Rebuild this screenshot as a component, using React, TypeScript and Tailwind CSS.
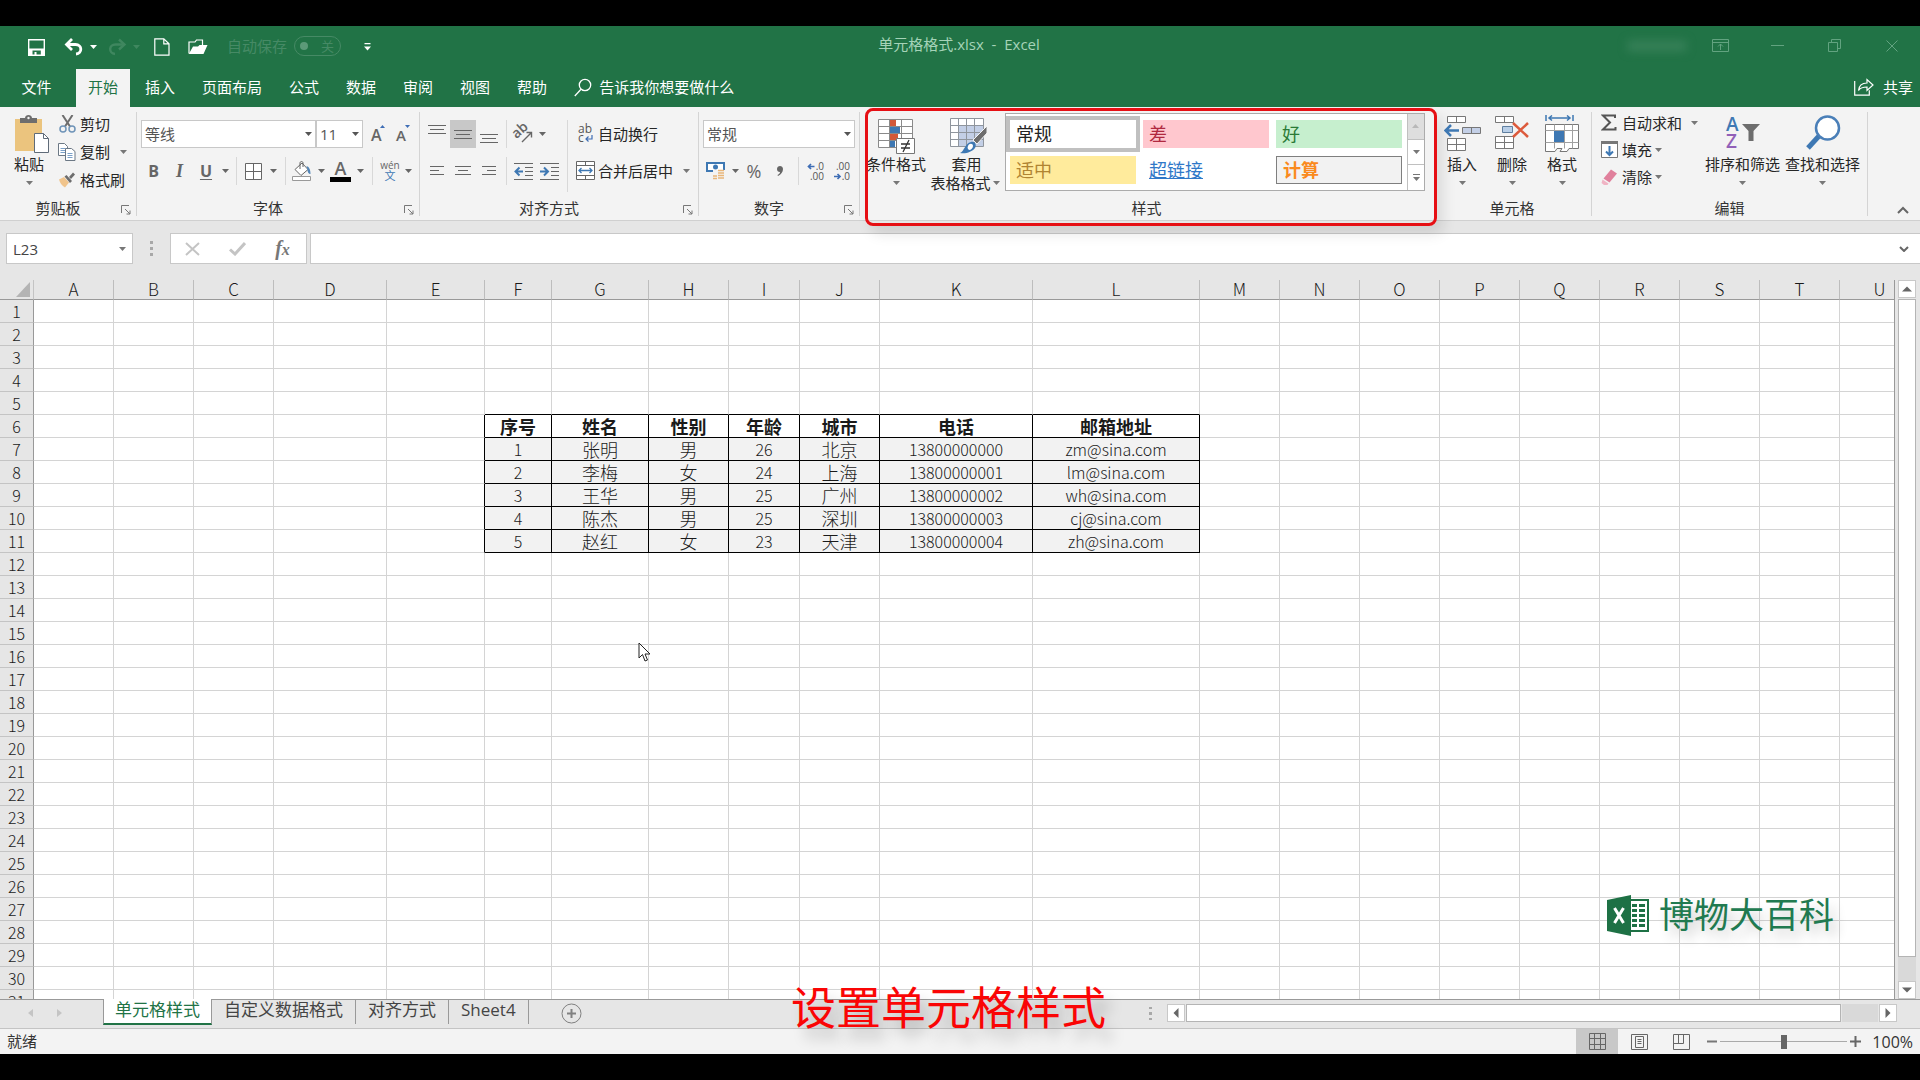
import type { ReactNode } from 'react'
import { clsx } from 'clsx'

/* ---------- sheet data ---------- */

type Column = { name: string; width: number }

const COLUMNS: Column[] = [
  { name: 'A', width: 80 },
  { name: 'B', width: 80 },
  { name: 'C', width: 80 },
  { name: 'D', width: 113 },
  { name: 'E', width: 98 },
  { name: 'F', width: 67 },
  { name: 'G', width: 97 },
  { name: 'H', width: 80 },
  { name: 'I', width: 71 },
  { name: 'J', width: 80 },
  { name: 'K', width: 153 },
  { name: 'L', width: 167 },
  { name: 'M', width: 80 },
  { name: 'N', width: 80 },
  { name: 'O', width: 80 },
  { name: 'P', width: 80 },
  { name: 'Q', width: 80 },
  { name: 'R', width: 80 },
  { name: 'S', width: 80 },
  { name: 'T', width: 80 },
  { name: 'U', width: 80 },
]

const TABLE_WIDTH = 34 + COLUMNS.reduce((sum, c) => sum + c.width, 0)

const ROWS = Array.from({ length: 31 }, (_, i) => i + 1)

const FIRST_ROW = 6
const FIRST_COL = 5

const DATA = [
  ['序号', '姓名', '性别', '年龄', '城市', '电话', '邮箱地址'],
  ['1', '张明', '男', '26', '北京', '13800000000', 'zm@sina.com'],
  ['2', '李梅', '女', '24', '上海', '13800000001', 'lm@sina.com'],
  ['3', '王华', '男', '25', '广州', '13800000002', 'wh@sina.com'],
  ['4', '陈杰', '男', '25', '深圳', '13800000003', 'cj@sina.com'],
  ['5', '赵红', '女', '23', '天津', '13800000004', 'zh@sina.com'],
]

const TABS = ['文件', '开始', '插入', '页面布局', '公式', '数据', '审阅', '视图', '帮助']

/* ---------- small pieces ---------- */

function Caret({ className }: { className?: string }) {
  return (
    <span className={clsx('flex w-3 shrink-0 items-center justify-center', className)}>
      <svg width="7" height="4" viewBox="0 0 7 4" aria-hidden="true">
        <path d="M0 0h7L3.500 4z" fill="currentColor" />
      </svg>
    </span>
  )
}

function Tool({ label, className, children }: { label: string; className?: string; children: ReactNode }) {
  return (
    <button
      type="button"
      aria-label={label}
      className={clsx('flex h-7 shrink-0 items-center justify-center text-[#666]', className)}
    >
      {children}
    </button>
  )
}

function Sep({ className }: { className?: string }) {
  return (
    <span className={clsx('flex shrink-0 justify-center', className)}>
      <span className="w-px bg-[#d8d8d8]" />
    </span>
  )
}

function Group({
  label,
  launcher,
  border = true,
  className,
  children,
}: {
  label: string
  launcher?: boolean
  border?: boolean
  className?: string
  children: ReactNode
}) {
  return (
    <section
      aria-label={label}
      className={clsx('relative flex shrink-0 flex-col', border && 'border-r border-[#d4d4d4]', className)}
    >
      <div className="flex h-[88px]">{children}</div>
      <div className="flex h-4 items-center">
        <span className="flex-1 text-center leading-4 text-[#333]">{label}</span>
        {launcher && (
          <button type="button" aria-label={`${label}设置`} className="flex w-5 justify-center pt-1 text-[#777]">
            <svg width="10" height="10" viewBox="0 0 10 10" fill="none" stroke="currentColor" aria-hidden="true">
              <path d="M.5 8V.5H8M4 4l5 5M9 5.500V9H5.500" />
            </svg>
          </button>
        )}
      </div>
    </section>
  )
}

function BigButton({
  label,
  second,
  icon,
  className,
}: {
  label: string
  second?: string
  icon: ReactNode
  className?: string
}) {
  return (
    <button type="button" className={clsx('flex shrink-0 flex-col items-center pt-[3px] text-[#262626]', className)}>
      <span className="flex h-[39px] items-start justify-center">{icon}</span>
      <span className="h-[19px] leading-5 whitespace-nowrap">{label}</span>
      <span className="flex h-5 items-center leading-5 whitespace-nowrap">
        {second}
        <Caret className="text-[#777]" />
      </span>
    </button>
  )
}

function RowButton({ label, icon, caret }: { label: string; icon: ReactNode; caret?: string }) {
  return (
    <button type="button" className="flex h-[27px] items-center text-[#262626]">
      <span className="flex w-[26px] shrink-0 justify-center">{icon}</span>
      <span className="whitespace-nowrap">{label}</span>
      {caret !== undefined && <Caret className={clsx('text-[#777]', caret)} />}
    </button>
  )
}

function Combo({ label, value, className }: { label: string; value: string; className?: string }) {
  return (
    <span className={clsx('relative flex h-7 shrink-0 text-[#555]', className)}>
      <select
        aria-label={label}
        defaultValue={value}
        className="h-full w-full appearance-none border border-[#c8c8c8] bg-white pl-[3px] outline-none"
      >
        <option>{value}</option>
      </select>
      <Caret className="pointer-events-none absolute inset-y-0 right-[2px]" />
    </span>
  )
}

function Lines({ widths, y = 0, align = 'center' }: { widths: number[]; y?: number; align?: 'left' | 'center' | 'right' }) {
  return (
    <svg width="20" height="26" viewBox="0 0 20 26" stroke="#666" aria-hidden="true">
      {widths.map((w, i) => {
        const x = align === 'left' ? 3 : align === 'right' ? 17 - w : 10 - w / 2
        const ly = 8.5 + y + i * 4
        return <path key={i} d={`M${x} ${ly}h${w}`} />
      })}
    </svg>
  )
}

/* ---------- title bar ---------- */

function TitleBar() {
  return (
    <header className="relative flex h-[43px] items-center pb-1 pl-5 text-white">
      <button type="button" aria-label="保存" className="flex w-8 justify-center pt-[3px]">
        <svg width="17" height="17" viewBox="0 0 17 17" aria-hidden="true">
          <path d="M.7.7h15.600v15.600H.7z" fill="none" stroke="#fff" strokeWidth="1.400" />
          <path d="M1 9.500h15V16h-3.200v-4.500H4.500V16H1zM6.500 13h2v3h-2z" fill="#fff" />
        </svg>
      </button>
      <button type="button" aria-label="撤消" className="ml-3 flex items-center pt-[3px]">
        <svg width="20" height="18" viewBox="0 0 20 18" fill="none" stroke="#fff" aria-hidden="true">
          <path d="M3 6.500h8.500c7 0 7 9 .5 9.500" strokeWidth="2.800" />
          <path d="M8 1 2.500 6.500 8 12" strokeWidth="2.800" />
        </svg>
        <Caret className="ml-[3px]" />
      </button>
      <button type="button" aria-label="恢复" className="ml-2 flex items-center pt-[3px] text-[#3f875f]" disabled>
        <svg width="20" height="18" viewBox="0 0 20 18" fill="none" stroke="currentColor" aria-hidden="true">
          <path d="M17 6.500H8.500c-7 0-7 9-.5 9.500" strokeWidth="2.400" />
          <path d="m12 1.500 5.500 5-5.500 5" strokeWidth="2.400" />
        </svg>
        <Caret className="ml-[3px]" />
      </button>
      <button type="button" aria-label="新建" className="ml-3 pt-[3px]">
        <svg width="16" height="18" viewBox="0 0 16 18" fill="none" stroke="#fff" strokeWidth="1.200" aria-hidden="true">
          <path d="M.8.800h9l5.200 5v11.400H.8zM9.800.800v5h5.200" />
        </svg>
      </button>
      <button type="button" aria-label="打开" className="ml-[18px] pt-[3px]">
        <svg width="20" height="16" viewBox="0 0 20 16" aria-hidden="true">
          <path d="M1 14.500V3h6l1.500-2h6v5" fill="none" stroke="#fff" strokeWidth="1.200" />
          <path d="M.8 15 5 7.500h5L11.500 6h8L15.500 15z" fill="#fff" />
        </svg>
      </button>
      <span className="ml-[19px] text-[#468a65]">自动保存</span>
      <button
        type="button"
        role="switch"
        aria-checked="false"
        aria-label="自动保存"
        className="ml-[7px] flex h-[20px] w-[47px] items-center justify-between rounded-full border border-[#468a65] pr-[6px] pl-[5px] text-[13px] text-[#468a65]"
      >
        <span className="size-2 rounded-full bg-[#5b9a78]" />关
      </button>
      <button type="button" aria-label="自定义快速访问工具栏" className="ml-[23px] pt-[3px]">
        <svg width="7" height="8" viewBox="0 0 7 8" fill="#fff" aria-hidden="true">
          <path d="M.5 0h6v1.200h-6zM0 3.500h7L3.500 7.500z" />
        </svg>
      </button>

      <h1 className="pointer-events-none absolute inset-x-0 top-2 pr-[2px] text-center leading-5 whitespace-pre text-[#a5d3b8]">
        单元格格式.xlsx{'  -  '}Excel
      </h1>

      <span className="mr-[5px] ml-auto h-3 w-[60px] rounded bg-[#347f56] blur-xs" />
      <div className="flex items-center text-[#62a380]">
        <button type="button" aria-label="功能区显示选项" className="flex w-[57px] justify-center">
          <svg width="17" height="13" viewBox="0 0 17 13" fill="none" stroke="currentColor" aria-hidden="true">
            <path d="M.5.500h16v12H.5zM.5 3.500h16M8.500 11V5M6 7.500 8.500 5 11 7.500" />
          </svg>
        </button>
        <button type="button" aria-label="最小化" className="flex w-[57px] justify-center">
          <svg width="13" height="13" viewBox="0 0 13 13" stroke="currentColor" aria-hidden="true">
            <path d="M0 6.500h13" />
          </svg>
        </button>
        <button type="button" aria-label="向下还原" className="flex w-[57px] justify-center">
          <svg width="13" height="13" viewBox="0 0 13 13" fill="none" stroke="currentColor" aria-hidden="true">
            <path d="M.5 3.500h9v9h-9zM3.500 3.500v-3h9v9h-3" />
          </svg>
        </button>
        <button type="button" aria-label="关闭" className="flex w-[57px] justify-center">
          <svg width="12" height="12" viewBox="0 0 12 12" stroke="currentColor" aria-hidden="true">
            <path d="m.5.500 11 11M11.500.500l-11 11" />
          </svg>
        </button>
      </div>
    </header>
  )
}

function TabBar() {
  return (
    <nav aria-label="功能区选项卡" className="flex h-[38px] items-stretch text-white">
      {TABS.map((tab, i) => (
        <button
          key={tab}
          type="button"
          className={clsx(
            'mr-[3px] px-3 pb-[3px] whitespace-nowrap',
            i === 0 && 'w-[73px]',
            i === 1 && 'bg-[#f3f3f3] text-[#217346]',
          )}
        >
          {tab}
        </button>
      ))}
      <button type="button" className="ml-3 flex items-center pb-[2px] whitespace-nowrap">
        <svg width="18" height="19" viewBox="0 0 18 19" fill="none" stroke="#fff" strokeWidth="1.300" aria-hidden="true">
          <circle cx="11" cy="7" r="5.700" />
          <path d="M7 11.300.800 18" />
        </svg>
        <span className="ml-[7px]">告诉我你想要做什么</span>
      </button>
      <button type="button" className="mr-[7px] ml-auto flex items-center pb-[3px]">
        <svg width="20" height="18" viewBox="0 0 20 18" fill="none" stroke="#fff" strokeWidth="1.200" aria-hidden="true">
          <path d="M.7 3v14.200h14.600v-5" />
          <path d="M4.500 12.500c.5-5 3.500-7.500 8.500-7.500V1.500l6 5.500-6 5.500V9c-4 0-6.500.500-8.500 3.500z" />
        </svg>
        <span className="ml-[9px]">共享</span>
      </button>
    </nav>
  )
}

/* ---------- ribbon groups ---------- */

function ClipboardGroup() {
  return (
    <Group label="剪贴板" launcher className="w-[137px]">
      <BigButton
        label="粘贴"
        className="ml-1 w-[50px]"
        icon={
          <svg width="36" height="38" viewBox="0 0 36 38" className="ml-[5px]" aria-hidden="true">
            <path d="M1 4h27v32H1z" fill="#ebc47e" />
            <path d="M6 8V3h5c0-4 7-4 7 0h5v5z" fill="#6d6d6d" />
            <circle cx="14.500" cy="3" r="1.200" fill="#f3f3f3" />
            <path d="M20.500 18.500h9l5 5v14h-14z" fill="#fff" stroke="#5f6b78" />
            <path d="M29.500 18.500v5h5" fill="none" stroke="#5f6b78" />
          </svg>
        }
      />
      <div className="-mt-[2px] flex flex-col items-start gap-px">
        <RowButton
          label="剪切"
          icon={
            <svg width="17" height="18" viewBox="0 0 17 18" fill="none" aria-hidden="true">
              <path d="M3.500 0 11 11.500M13.500 0 6 11.500" stroke="#6d6d6d" strokeWidth="2" />
              <circle cx="4" cy="14" r="3" stroke="#6f94b8" strokeWidth="1.500" />
              <circle cx="13" cy="14" r="3" stroke="#6f94b8" strokeWidth="1.500" />
            </svg>
          }
        />
        <RowButton
          label="复制"
          caret="ml-[7px]"
          icon={
            <svg width="18" height="18" viewBox="0 0 18 18" fill="#fff" stroke="#6c7885" aria-hidden="true">
              <path d="M.5.500h6l3 3v9h-9z" />
              <path d="M2.500 5.500h5M2.500 7.500h5M2.500 9.500h5" stroke="#7ba0c8" />
              <path d="M7.500 5.500h6l3.500 3v9H7.500z" />
              <path d="M9.500 10.500h5M9.500 12.500h5M9.500 14.500h5" stroke="#7ba0c8" />
            </svg>
          }
        />
        <RowButton
          label="格式刷"
          icon={
            <svg width="18" height="16" viewBox="0 0 18 16" aria-hidden="true">
              <path d="M1 7.500 6 5l5 5.500-4 5C4 14 2 11 1 7.500z" fill="#f0c48c" />
              <path d="m6.500 4.500 2-1.500 5.500 6-2 2z" fill="#6d6d6d" />
              <path d="m11 5 4-4.500 2 2L13 7z" fill="#6d6d6d" />
            </svg>
          }
        />
      </div>
    </Group>
  )
}

function FontGroup() {
  return (
    <Group label="字体" launcher className="w-[283px]">
      <div className="flex flex-col gap-[9px] pt-2 pl-1">
        <div className="flex">
          <Combo label="字体" value="等线" className="w-[175px]" />
          <Combo label="字号" value="11" className="w-[47px]" />
          <Tool label="增大字号" className="ml-[2px] w-[25px]">
            <svg width="14" height="20" viewBox="0 0 14 20" className="overflow-visible" aria-hidden="true">
              <text x="0" y="17" fontSize="16" fontWeight="600" fill="#666" className="font-['Open_Sans']">A</text>
              <path d="M9 4 11.500 1 14 4z" fill="#3e6db5" />
            </svg>
          </Tool>
          <Tool label="减小字号" className="w-[25px]">
            <svg width="14" height="20" viewBox="0 0 14 20" className="overflow-visible" aria-hidden="true">
              <text x="0" y="17" fontSize="15" fontWeight="600" fill="#666" className="font-['Open_Sans']">A</text>
              <path d="M9 1 11.500 4 14 1z" fill="#3e6db5" />
            </svg>
          </Tool>
        </div>
        <div className="flex">
          <Tool label="加粗" className="w-[25px] font-['Open_Sans'] text-base font-bold">B</Tool>
          <Tool label="倾斜" className="w-[27px] font-['Liberation_Serif'] text-lg font-bold italic">I</Tool>
          <Tool label="下划线" className="w-[26px] font-['Open_Sans'] text-base font-bold underline underline-offset-2">U</Tool>
          <Tool label="下划线样式"><Caret /></Tool>
          <Sep className="w-[11px]" />
          <Tool label="边框">
            <svg className="mx-[3px]" width="17" height="17" viewBox="0 0 17 17" fill="#fff" stroke="#666" aria-hidden="true">
              <path d="M.5.500h16v16H.5zM8.500.500v16M.5 8.500h16" />
            </svg>
            <Caret className="mx-[2px]" />
          </Tool>
          <Sep className="w-2" />
          <Tool label="填充颜色">
            <svg className="mx-[3px]" width="20" height="20" viewBox="0 0 20 20" aria-hidden="true">
              <path d="M3 8.500 10 2l6 6.500-7 6z" fill="#fff" stroke="#666" />
              <path d="M8 8V2c0-2 3-2 3 0v4" fill="none" stroke="#666" />
              <path d="M14.500 5c3 1 4 4 4 8-2 0-3-2-3-4.500z" fill="#5386b8" />
              <path d="M.5 15.500h18v4H.5z" fill="#fff" stroke="#999" />
            </svg>
            <Caret />
          </Tool>
          <Tool label="字体颜色">
            <svg className="mx-[3px] overflow-visible" width="21" height="21" viewBox="0 0 21 21" aria-hidden="true">
              <text x="4.500" y="14" fontSize="18" fontWeight="600" fill="#666" className="font-['Open_Sans']">A</text>
              <path d="M0 16h21v5H0z" fill="#000" />
            </svg>
            <Caret />
          </Tool>
          <Sep className="w-3" />
          <Tool label="拼音指南">
            <span className="flex w-6 flex-col items-center">
              <span className="font-['Open_Sans'] text-[10px] leading-[9px]">wén</span>
              <span className="text-[11px] leading-[11px] text-[#3e78b3]">文</span>
            </span>
            <Caret />
          </Tool>
        </div>
      </div>
    </Group>
  )
}

function IndentIcon({ outward }: { outward?: boolean }) {
  return (
    <svg width="19" height="17" viewBox="0 0 19 17" fill="none" aria-hidden="true">
      <path d="M0 .500h19M11 4.500h8M11 8.500h8M11 12.500h8M0 16.500h19" stroke="#666" />
      {outward ? (
        <path d="M9 8.500H2M5.500 4.500l-4 4 4 4" stroke="#3e78b3" strokeWidth="2" />
      ) : (
        <path d="M0 8.500h7M4 4.500l4 4-4 4" stroke="#3e78b3" strokeWidth="2" />
      )}
    </svg>
  )
}

function AlignGroup() {
  return (
    <Group label="对齐方式" launcher className="w-[279px]">
      <div className="flex flex-col gap-[9px] pt-2 pl-1">
        <div className="flex">
          <Tool label="顶端对齐" className="w-[26px]"><Lines widths={[18, 14, 18]} y={-4} /></Tool>
          <Tool label="垂直居中" className="w-[26px] bg-[#c8c8c8]"><Lines widths={[18, 14, 18]} y={1} /></Tool>
          <Tool label="底端对齐" className="w-[26px]"><Lines widths={[18, 14, 18]} y={5} /></Tool>
          <Sep className="w-2" />
          <Tool label="方向">
            <svg className="mx-[3px] overflow-visible" width="20" height="20" viewBox="0 0 20 20" aria-hidden="true">
              <text x="0" y="12" fontSize="14" fontWeight="600" fill="#666" transform="rotate(-42 6 9)" className="font-['Open_Sans']">ab</text>
              <path d="m9 18 9-9M13.500 8.500h5v5" fill="none" stroke="#666" strokeWidth="1.400" />
            </svg>
            <Caret />
          </Tool>
        </div>
        <div className="flex">
          <Tool label="左对齐" className="w-[26px]"><Lines widths={[14, 9, 14]} align="left" /></Tool>
          <Tool label="居中" className="w-[26px]"><Lines widths={[16, 10, 16]} /></Tool>
          <Tool label="右对齐" className="w-[26px]"><Lines widths={[14, 9, 14]} align="right" /></Tool>
          <Sep className="w-2" />
          <Tool label="减少缩进量" className="w-[26px]"><IndentIcon outward /></Tool>
          <Tool label="增加缩进量" className="w-[26px]"><IndentIcon /></Tool>
        </div>
      </div>
      <Sep className="my-2 w-[10px]" />
      <div className="flex flex-col items-start gap-[10px] pt-2">
        <RowButton
          label="自动换行"
          icon={
            <svg width="17" height="18" viewBox="0 0 17 18" className="overflow-visible" aria-hidden="true">
              <text x="1" y="8" fontSize="12" fill="#555" className="font-['Open_Sans']">ab</text>
              <text x="1" y="17" fontSize="12" fill="#555" className="font-['Open_Sans']">c</text>
              <path d="M15 10v4H9M11.500 11.500 9 14l2.500 2.500" fill="none" stroke="#3e6db5" strokeWidth="1.200" />
            </svg>
          }
        />
        <RowButton
          label="合并后居中"
          caret="ml-[7px]"
          icon={
            <svg width="19" height="19" viewBox="0 0 19 19" fill="#fff" stroke="#666" aria-hidden="true">
              <path d="M.5.500h18v18H.5zM.5 4.500h18M.5 14.500h18M9.500.500v4M9.500 14.500v4" />
              <path d="M3 9.500h13M5.500 7 3 9.500 5.500 12M13.500 7 16 9.500 13.500 12" fill="none" stroke="#3e78b3" strokeWidth="1.300" />
            </svg>
          }
        />
      </div>
    </Group>
  )
}

function DecimalIcon({ more }: { more?: boolean }) {
  return (
    <svg width="18" height="19" viewBox="0 0 18 19" className="overflow-visible" aria-hidden="true">
      <g fontSize="10" fill="#555" className="font-['Open_Sans']">
        <text x="17" y="8" textAnchor="end">{more ? '.0' : '.00'}</text>
        <text x="17" y="18" textAnchor="end">{more ? '.00' : '.0'}</text>
      </g>
      {more ? (
        <path d="M7.500 4.500H2M4 2 1.500 4.500 4 7" fill="none" stroke="#3e6db5" strokeWidth="1.700" />
      ) : (
        <path d="M1 14.500h5.500M4.500 12 7 14.500 4.500 17" fill="none" stroke="#3e6db5" strokeWidth="1.700" />
      )}
    </svg>
  )
}

function NumberGroup() {
  return (
    <Group label="数字" launcher className="w-[161px]">
      <div className="flex flex-col gap-[9px] pt-2 pl-1">
        <Combo label="数字格式" value="常规" className="w-[152px]" />
        <div className="flex">
          <Tool label="会计数字格式">
            <svg className="mx-[3px]" width="20" height="20" viewBox="0 0 20 20" aria-hidden="true">
              <path d="M0 1h19v10H0z" fill="#3e78b3" />
              <path d="M2 3h15v6H2z" fill="#fff" />
              <circle cx="9.500" cy="6" r="2.500" fill="#3e78b3" />
              <path d="M7 9h12v11H7z" fill="#f3f3f3" />
              <path d="M12 9.500h6M12 12h6M12 14.500h6M7 15h4M7 17.500h4M12 17h6" stroke="#e9b67a" strokeWidth="1.600" />
            </svg>
            <Caret />
          </Tool>
          <Tool label="百分比样式" className="w-[26px] font-['Open_Sans'] text-lg">%</Tool>
          <Tool label="千位分隔样式" className="w-[26px]">
            <svg width="8" height="10" viewBox="0 0 8 10" aria-hidden="true">
              <path d="M1 3c0-4 6-4 6 0 0 3-2 5.500-5 7l-.5-1C3.500 8 4 7 4 6 2 6 1 5 1 3z" fill="#666" />
            </svg>
          </Tool>
          <Sep className="w-[10px]" />
          <Tool label="增加小数位数" className="w-[26px]"><DecimalIcon more /></Tool>
          <Tool label="减少小数位数" className="w-[26px]"><DecimalIcon /></Tool>
        </div>
      </div>
    </Group>
  )
}

const CELL_STYLES = [
  { name: '常规', style: 'bg-white text-[#222] ring-4 ring-[#c0c0c0]' },
  { name: '差', style: 'bg-[#ffc7ce] text-[#b02a40]' },
  { name: '好', style: 'bg-[#c6efce] text-[#2a7a36]' },
  { name: '适中', style: 'bg-[#ffeb9c] text-[#b08432]' },
  { name: '超链接', style: 'text-[#2f78c8] underline' },
  { name: '计算', style: 'border border-[#7f7f7f] bg-[#f2f2f2] pl-[5px] font-bold text-[#fa8a1e]' },
]

function StylesGroup() {
  return (
    <Group label="样式" border={false} className="w-[577px] pr-1">
      <BigButton
        label="条件格式"
        className="ml-[6px] w-[60px]"
        icon={
          <svg className="mt-1" width="37" height="36" viewBox="0 0 37 36" aria-hidden="true">
            <path d="M.5.500h34v28H.5z" fill="#fff" />
            <path d="M12 1h6v7h-6zM12 15h8v7h-8z" fill="#d2593a" />
            <path d="M12 8h10v7H12zM12 22h5v7h-5z" fill="#3e78b3" />
            <path d="M.5.500h34v28H.5zM.5 7.500h34M.5 14.500h34M.5 21.500h34M11.500.500v28M23.500.500v28" fill="none" stroke="#8a8a8a" />
            <path d="M18.500 19.500h18v15h-18z" fill="#fff" stroke="#777" />
            <path d="M23 25h9M23 29h9M31 21l-6 12" stroke="#333" strokeWidth="1.300" />
          </svg>
        }
      />
      <BigButton
        label="套用"
        second="表格格式"
        className="ml-1 w-[73px]"
        icon={
          <svg className="mt-[3px] ml-1" width="37" height="36" viewBox="0 0 37 36" aria-hidden="true">
            <path d="M.5.500h33v28H.5z" fill="#fff" />
            <path d="M9 8h24v20H9z" fill="#c3cfe6" />
            <path d="M.5.500h33v28H.5zM.5 7.500h33M.5 14.500h33M.5 21.500h33M8.500.500v28M16.500.500v28M24.500.500v28" fill="none" stroke="#8f959d" />
            <path d="M37 8v7L27 26l-4-4z" fill="#6d6d6d" stroke="#f3f3f3" />
            <path d="M10 35c4-1 5-10 11-11 4-1 6 3 4 6-3 4-9 6-15 5z" fill="#3e78b3" />
            <path d="M18 28c1-3 5-3 5 0 0 2-2 4-4 4-1-1-2-2-1-4z" fill="#fff" />
          </svg>
        }
      />
      <div className="mt-px ml-[2px] flex h-[78px] w-[420px] shrink-0 border border-[#ababab] bg-white text-lg">
        <ul aria-label="单元格样式" className="grid w-[401px] shrink-0 grid-cols-3 grid-rows-2 gap-x-[7px] gap-y-2 py-[6px] pr-[5px] pl-1">
          {CELL_STYLES.map(({ name, style }) => (
            <li key={name} className="flex">
              <button type="button" className={clsx('flex flex-1 items-center pl-[6px] leading-6', style)}>
                {name}
              </button>
            </li>
          ))}
        </ul>
        <div className="flex flex-1 flex-col divide-y divide-[#c0c0c0] border-l border-[#c0c0c0] text-[#777]">
          <button type="button" aria-label="上一行" className="flex flex-1 items-center justify-center bg-[#dedede] text-[#b8b8b8]" disabled>
            <Caret className="rotate-180" />
          </button>
          <button type="button" aria-label="下一行" className="flex flex-1 items-center justify-center">
            <Caret />
          </button>
          <button type="button" aria-label="其他" className="flex flex-1 items-center justify-center">
            <svg width="7" height="7" viewBox="0 0 7 7" fill="currentColor" aria-hidden="true">
              <path d="M0 0h7v1H0zM0 3h7L3.500 7z" />
            </svg>
          </button>
        </div>
      </div>
      {/* callout frame around the group */}
      <div className="pointer-events-none absolute -top-1 -bottom-[10px] left-[5px] w-[572px] rounded-lg border-3 border-[#e60f14] shadow-[6px_8px_14px_rgba(0,0,0,0.1)]" />
    </Group>
  )
}

function CellsGroup() {
  return (
    <Group label="单元格" className="w-[155px] pr-1">
      <BigButton
        label="插入"
        className="w-[50px]"
        icon={
          <svg width="37" height="36" viewBox="0 0 37 36" fill="#fff" stroke="#777" aria-hidden="true">
            <path d="M3.500 1.500h18v6h-18zM12.500 1.500v6M3.500 23.500h18v12h-18zM3.500 29.500h18M12.500 23.500v12" />
            <path d="M18.500 12.500h18v6h-18zM27.500 12.500v6" fill="#c3cfe6" />
            <path d="M15 15.500H2M7 10l-5.500 5.500L7 21" fill="none" stroke="#3e78b3" strokeWidth="2.500" />
          </svg>
        }
      />
      <BigButton
        label="删除"
        className="w-[50px]"
        icon={
          <svg width="36" height="36" viewBox="0 0 36 36" fill="#fff" stroke="#777" aria-hidden="true">
            <path d="M1.500 1.500h18v6h-18zM10.500 1.500v6M1.500 21.500h18v12h-18zM1.500 27.500h18M10.500 21.500v12" />
            <path d="M8.500 11.500h10v6h-10z" fill="#b9cfe8" stroke="#5f7f9f" />
            <path d="m19 8 15 14M34 8 19 22" stroke="#dc5a3c" strokeWidth="2.500" />
          </svg>
        }
      />
      <BigButton
        label="格式"
        className="w-[50px]"
        icon={
          <svg width="35" height="38" viewBox="0 0 35 38" aria-hidden="true">
            <path d="M.5 9.500h33v24H24l-2 3h-7l2-3H12l-2 3H.5z" fill="#fff" stroke="#777" />
            <path d="M9.500 9.500v24M19.500 9.500v24M27.500 9.500v24M.5 15.500h33M.5 27.500h33" stroke="#a0a0a0" />
            <path d="M9 16h10v11H9z" fill="#3e78b3" />
            <path d="M1 0v6M28 0v6M4 3h21M7 .500 4 3l3 2.500M22 .500 25 3l-3 2.500" fill="none" stroke="#3e78b3" strokeWidth="1.500" />
          </svg>
        }
      />
    </Group>
  )
}

function EditGroup() {
  return (
    <Group label="编辑" className="w-[276px]">
      <div className="-mt-[3px] flex w-[111px] flex-col items-start pl-1">
        <RowButton
          label="自动求和"
          caret="ml-[6px]"
          icon={
            <svg width="16" height="17" viewBox="0 0 16 17" fill="none" stroke="#555" strokeWidth="2" aria-hidden="true">
              <path d="M14 4V1.500H2L9 8.500l-7 7h12.500V13" />
            </svg>
          }
        />
        <RowButton
          label="填充"
          caret=""
          icon={
            <svg width="17" height="17" viewBox="0 0 17 17" fill="#fff" aria-hidden="true">
              <path d="M.5.500h16v16H.5z" stroke="#777" />
              <path d="M0 0h17v3H0z" fill="#777" />
              <path d="M8.500 5v9M5 10.500l3.500 3.500 3.500-3.500" fill="none" stroke="#3e78b3" strokeWidth="2" />
            </svg>
          }
        />
        <RowButton
          label="清除"
          caret=""
          icon={
            <svg width="17" height="16" viewBox="0 0 17 16" aria-hidden="true">
              <path d="m10 .500 6 4-7.500 9-6-4z" fill="#e0809c" />
              <path d="m1.500 10.500 6 4-1 1.500H3L.5 14z" fill="#f0b4c4" />
            </svg>
          }
        />
      </div>
      <BigButton
        label="排序和筛选"
        className="w-[79px]"
        icon={
          <svg width="36" height="36" viewBox="0 0 36 36" className="overflow-visible" aria-hidden="true">
            <g fontSize="19" fontWeight="600" className="font-['Open_Sans']">
              <text x="1" y="16" fill="#3e78b3">A</text>
              <text x="1" y="33" fill="#9160b8">Z</text>
            </g>
            <path d="M17 9h18l-6.500 7v10h-5V16z" fill="#6d6d6d" />
          </svg>
        }
      />
      <BigButton
        label="查找和选择"
        className="w-[81px]"
        icon={
          <svg width="36" height="36" viewBox="0 0 36 36" aria-hidden="true">
            <path d="M14 21 3 33" stroke="#3e78b3" strokeWidth="5" />
            <circle cx="22.500" cy="13" r="11.500" fill="#fff" stroke="#4a7fb8" strokeWidth="2.500" />
          </svg>
        }
      />
    </Group>
  )
}

function Ribbon() {
  return (
    <div className="flex border-b border-[#d0d0d0] bg-[#f3f3f3] pt-[5px] pb-1">
      <ClipboardGroup />
      <FontGroup />
      <AlignGroup />
      <NumberGroup />
      <StylesGroup />
      <CellsGroup />
      <EditGroup />
      <button type="button" aria-label="折叠功能区" className="mr-[11px] mb-[2px] ml-auto self-end text-[#666]">
        <svg width="12" height="8" viewBox="0 0 12 8" fill="none" stroke="currentColor" strokeWidth="2" aria-hidden="true">
          <path d="m1 7 5-5 5 5" />
        </svg>
      </button>
    </div>
  )
}

/* ---------- formula bar and grid ---------- */

function FormulaBar() {
  return (
    <div className="flex h-[59px] shrink-0 pt-3 pb-4 pl-[6px]">
      <div className="flex w-[127px] border border-[#c8c8c8] bg-white text-[#444]">
        <input
          aria-label="名称框"
          defaultValue="L23"
          className="w-full min-w-0 pl-[6px] font-['Open_Sans'] text-[15px] outline-none"
        />
        <button type="button" aria-label="选择名称" className="pr-1 text-[#777]"><Caret /></button>
      </div>
      <svg className="mx-[17px] self-center" width="3" height="15" viewBox="0 0 3 15" fill="#a8a8a8" aria-hidden="true">
        <path d="M0 0h3v3H0zM0 6h3v3H0zM0 12h3v3H0z" />
      </svg>
      <div className="flex w-[137px] items-center border border-[#c8c8c8] bg-white">
        <button type="button" aria-label="取消" className="flex w-[43px] justify-center">
          <svg width="15" height="14" viewBox="0 0 15 14" stroke="#c4c4c4" strokeWidth="2" aria-hidden="true">
            <path d="m1 1 13 12M14 1 1 13" />
          </svg>
        </button>
        <button type="button" aria-label="输入" className="flex w-[47px] justify-center">
          <svg width="17" height="14" viewBox="0 0 17 14" fill="none" stroke="#c4c4c4" strokeWidth="3" aria-hidden="true">
            <path d="m1 7.500 5 4.500L16 1" />
          </svg>
        </button>
        <button
          type="button"
          aria-label="插入函数"
          className="w-[43px] text-center font-['Liberation_Serif'] text-xl leading-6 font-bold text-[#777] italic"
        >
          f<span className="text-base">x</span>
        </button>
      </div>
      <div className="ml-[3px] flex flex-1 border-y border-l border-[#c8c8c8] bg-white">
        <input aria-label="编辑栏" className="flex-1 px-2 outline-none" />
        <button type="button" aria-label="展开编辑栏" className="flex w-[33px] items-center justify-center text-[#666]">
          <svg width="10" height="6" viewBox="0 0 10 6" fill="none" stroke="currentColor" strokeWidth="2" aria-hidden="true">
            <path d="m1 1 4 4 4-4" />
          </svg>
        </button>
      </div>
    </div>
  )
}

function cellBorder(row: number, col: number) {
  const lastRow = FIRST_ROW + DATA.length - 1
  const lastCol = FIRST_COL + DATA[0].length - 1
  const inRows = row >= FIRST_ROW && row <= lastRow
  const inCols = col >= FIRST_COL && col <= lastCol
  return clsx(
    'border-r border-b',
    inRows && col >= FIRST_COL - 1 && col <= lastCol ? 'border-r-black' : 'border-r-[#d4d4d4]',
    inCols && row >= FIRST_ROW - 1 && row <= lastRow ? 'border-b-black' : 'border-b-[#d4d4d4]',
  )
}

function Sheet() {
  return (
    <div className="min-w-0 flex-1 overflow-hidden border-r border-[#999]">
      <table
        className="table-fixed border-separate border-spacing-0 bg-white text-base leading-[22px] font-light text-[#1a1a1a]"
        style={{ width: TABLE_WIDTH }}
      >
        <colgroup>
          <col className="w-[34px]" />
          {COLUMNS.map(c => (
            <col key={c.name} style={{ width: c.width }} />
          ))}
        </colgroup>
        <thead>
          <tr className="bg-[#e6e6e6] text-[17px]">
            <td className="h-5 border-r border-b border-r-[#c4c4c4] border-b-[#999] p-0">
              <svg className="ml-4" width="14" height="15" viewBox="0 0 14 15" aria-hidden="true">
                <path d="M14 0v15H0z" fill="#b4b4b4" />
              </svg>
            </td>
            {COLUMNS.map(c => (
              <th
                key={c.name}
                scope="col"
                className="h-5 border-r border-b border-r-[#bdbdbd] border-b-[#999] p-0 pb-[2px] text-center leading-[17px] font-light"
              >
                {c.name}
              </th>
            ))}
          </tr>
        </thead>
        <tbody>
          {ROWS.map(row => (
            <tr key={row}>
              <th
                scope="row"
                className="h-[23px] border-r border-b border-r-[#999] border-b-[#c4c4c4] bg-[#e6e6e6] p-0 text-center font-light"
              >
                {row}
              </th>
              {COLUMNS.map((c, col) => {
                const text = DATA[row - FIRST_ROW]?.[col - FIRST_COL]
                return (
                  <td
                    key={c.name}
                    className={clsx(
                      'h-[23px] p-0 text-center whitespace-nowrap',
                      cellBorder(row, col),
                      text && row === FIRST_ROW && 'text-lg leading-[22px] font-bold',
                      text && row > FIRST_ROW && 'bg-[#f2f2f2]',
                      text && row > FIRST_ROW && !/^[\w@.]+$/.test(text) && 'text-lg leading-[22px]',
                    )}
                  >
                    {text}
                  </td>
                )
              })}
            </tr>
          ))}
        </tbody>
      </table>
    </div>
  )
}

function ArrowButton({ label, className, d }: { label: string; className?: string; d: string }) {
  return (
    <button
      type="button"
      aria-label={label}
      className={clsx('flex size-[18px] shrink-0 items-center justify-center border border-[#c8c8c8] bg-white', className)}
    >
      <svg width="10" height="10" viewBox="0 0 10 10" fill="#666" aria-hidden="true">
        <path d={d} />
      </svg>
    </button>
  )
}

function VerticalScroll() {
  return (
    <div className="mr-1 ml-[3px] flex w-[18px] flex-col">
      <ArrowButton label="向上滚动" d="M0 7.500 5 2.500l5 5z" />
      <div className="mt-px flex-1 border border-[#b4b4b4] bg-white" />
      <div className="h-6 bg-[#d9d9d9]" />
      <ArrowButton label="向下滚动" d="M0 2.500h10l-5 5z" />
    </div>
  )
}

/* ---------- bottom bars ---------- */

function SheetTabs() {
  return (
    <div className="flex h-[29px] shrink-0 items-start border-t border-[#999] bg-[#e6e6e6] text-[17px] text-[#444]">
      <div className="flex w-[103px] gap-[24px] pt-[9px] pl-[28px]">
        <button type="button" aria-label="上一张工作表" disabled>
          <svg width="5" height="8" viewBox="0 0 5 8" aria-hidden="true"><path d="M5 0v8L0 4z" fill="#c4c4c4" /></svg>
        </button>
        <button type="button" aria-label="下一张工作表" disabled>
          <svg width="5" height="8" viewBox="0 0 5 8" aria-hidden="true"><path d="M0 0v8l5-4z" fill="#c4c4c4" /></svg>
        </button>
      </div>
      <button
        type="button"
        className="-mt-px h-[26px] border-x border-b-2 border-x-[#999] border-b-[#217346] bg-white px-[11px] pb-[2px] leading-[22px] text-[#217346]"
      >
        单元格样式
      </button>
      {['自定义数据格式', '对齐方式', 'Sheet4'].map(name => (
        <button key={name} type="button" className="h-6 border-r border-[#999] px-3 pb-1 leading-5">
          {name}
        </button>
      ))}
      <button type="button" aria-label="新工作表" className="mt-[3px] ml-8">
        <svg width="21" height="21" viewBox="0 0 21 21" fill="none" stroke="#808080" aria-hidden="true">
          <circle cx="10.500" cy="10.500" r="9.500" />
          <path d="M10.500 6v9M6 10.500h9" strokeWidth="2" />
        </svg>
      </button>
      <svg className="mt-[7px] mr-[15px] ml-auto" width="3" height="13" viewBox="0 0 3 13" fill="#a8a8a8" aria-hidden="true">
        <path d="M0 0h3v2H0zM0 5h3v3H0zM0 11h3v2H0z" />
      </svg>
      <div className="mt-1 mr-[23px] flex w-[38%]">
        <ArrowButton label="向左滚动" d="M7.500 0v10l-5-5z" />
        <div className="mx-px flex-1 border border-[#b4b4b4] bg-white" />
        <div className="mr-px w-9 bg-[#d9d9d9]" />
        <ArrowButton label="向右滚动" d="M2.500 0v10l5-5z" />
      </div>
    </div>
  )
}

function StatusBar() {
  return (
    <footer className="flex h-[26px] shrink-0 items-stretch border-t border-[#c4c4c4] bg-[#f3f3f3] text-[#333]">
      <span className="pl-[7px] leading-[25px]">就绪</span>
      <div className="ml-auto flex">
        <button type="button" aria-label="普通" className="flex w-[42px] items-center justify-center bg-[#c8c8c8]">
          <svg width="17" height="17" viewBox="0 0 17 17" fill="none" stroke="#666" aria-hidden="true">
            <path d="M.5.500h16v16H.5zM5.500.500v16M11.500.500v16M.5 5.500h16M.5 11.500h16" />
          </svg>
        </button>
        <button type="button" aria-label="页面布局" className="flex w-[42px] items-center justify-center">
          <svg width="17" height="16" viewBox="0 0 17 16" fill="none" stroke="#666" aria-hidden="true">
            <path d="M.5.500h16v15H.5zM4.500 2.500h8v11h-8zM6.500 5.500h4M6.500 7.500h4M6.500 9.500h4" />
          </svg>
        </button>
        <button type="button" aria-label="分页预览" className="flex w-[42px] items-center justify-center">
          <svg width="17" height="16" viewBox="0 0 17 16" fill="none" stroke="#666" aria-hidden="true">
            <path d="M.5.500h16v15H.5zM.5 9.500h10V.500M5.500.500v9" />
          </svg>
        </button>
      </div>
      <div className="ml-[5px] flex items-center">
        <button type="button" aria-label="缩小">
          <svg width="10" height="10" viewBox="0 0 10 10" aria-hidden="true"><path d="M0 3.500h10v2H0z" fill="#777" /></svg>
        </button>
        <input
          type="range"
          aria-label="显示比例"
          defaultValue={50}
          className="mx-[3px] h-4 w-[127px] appearance-none bg-[linear-gradient(#aaa,#aaa)] bg-[length:100%_1px] bg-center bg-no-repeat [&::-webkit-slider-thumb]:h-[14px] [&::-webkit-slider-thumb]:w-[6px] [&::-webkit-slider-thumb]:appearance-none [&::-webkit-slider-thumb]:bg-[#666]"
        />
        <button type="button" aria-label="放大">
          <svg width="11" height="11" viewBox="0 0 11 11" stroke="#666" strokeWidth="2" aria-hidden="true">
            <path d="M5.500 0v11M0 5.500h11" />
          </svg>
        </button>
        <span className="mr-[7px] ml-[11px] font-['Open_Sans'] text-base">100%</span>
      </div>
    </footer>
  )
}

/* ---------- overlays ---------- */

function BrandMark() {
  return (
    <div className="pointer-events-none absolute right-[86px] bottom-[143px] flex items-center gap-[10px]">
      <svg width="42" height="41" viewBox="0 0 42 41" aria-hidden="true">
        <path d="M22 5h19v31H22z" fill="#fff" stroke="#1e7145" strokeWidth="2" />
        <path
          d="M25 9h5v3h-5zM32 9h6v3h-6zM25 14h5v3h-5zM32 14h6v3h-6zM25 19h5v3h-5zM32 19h6v3h-6zM25 24h5v3h-5zM32 24h6v3h-6zM25 29h5v3h-5zM32 29h6v3h-6z"
          fill="#1e7145"
        />
        <path d="M0 5 24 0v41L0 36z" fill="#1e7145" />
        <path d="m7.500 13 9 15M16.500 13l-9 15" stroke="#fff" strokeWidth="3" />
      </svg>
      <span className="text-[35px] leading-[44px] text-[#217a50] [text-shadow:6px_8px_12px_rgba(0,0,0,0.2)]">博物大百科</span>
    </div>
  )
}

export default function App() {
  return (
    <div className="relative flex h-screen flex-col overflow-hidden bg-black py-[26px] font-['Open_Sans','Noto_Sans_CJK_SC',sans-serif] text-[15px] leading-5">
      <div className="shrink-0 bg-[#217346]">
        <TitleBar />
        <TabBar />
      </div>
      <Ribbon />
      <main className="flex min-h-0 flex-1 flex-col bg-[#e6e6e6]">
        <FormulaBar />
        <div className="flex min-h-0 flex-1 font-['Noto_Sans_CJK_SC',sans-serif]">
          <Sheet />
          <VerticalScroll />
        </div>
      </main>
      <SheetTabs />
      <StatusBar />

      <BrandMark />
      <svg className="pointer-events-none absolute top-[642px] left-[638px]" width="13" height="20" viewBox="0 0 13 20" aria-hidden="true">
        <path d="M1 1v15l3.500-3.500L7 19l2.500-1L7 12h5z" fill="#fff" stroke="#222" />
      </svg>
      <p className="pointer-events-none absolute bottom-[42px] left-[791px] text-[45px] leading-[60px] whitespace-nowrap text-[#fa0505] [text-shadow:8px_12px_14px_rgba(0,0,0,0.22)]">
        设置单元格样式
      </p>
    </div>
  )
}
